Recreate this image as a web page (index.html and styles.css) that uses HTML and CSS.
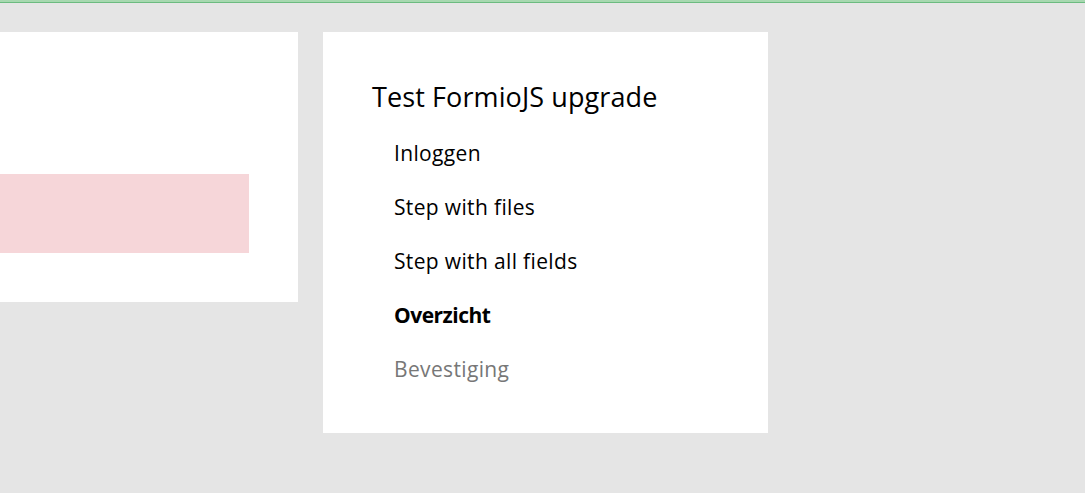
FILE: index.html
```html
<!DOCTYPE html>
<html lang="nl">
<head>
<meta charset="utf-8">
<title>Test FormioJS upgrade</title>
<link rel="stylesheet" href="styles.css">
</head>
<body>
<div class="topbar"></div>
<main class="layout">
  <section class="card card--form">
    <div class="alert"></div>
  </section>
  <aside class="card card--progress">
    <h2 class="progress__title">Test FormioJS upgrade</h2>
    <ol class="progress__list">
      <li class="progress__item">Inloggen</li>
      <li class="progress__item">Step with files</li>
      <li class="progress__item">Step with all fields</li>
      <li class="progress__item progress__item--current">Overzicht</li>
      <li class="progress__item progress__item--future">Bevestiging</li>
    </ol>
  </aside>
</main>
</body>
</html>
```

FILE: styles.css
```css
html, body {
  margin: 0;
  padding: 0;
}
body {
  background: #e5e5e5;
  font-family: "Open Sans", "Noto Sans", sans-serif;
  color: #000;
  height: 493px;
  overflow: hidden;
}
.topbar {
  height: 2px;
  background: #a7d8b0;
  border-bottom: 1px solid #6cbb80;
}
.layout {
  display: flex;
  align-items: flex-start;
  gap: 25px;
  padding-top: 29px;
}
.card {
  background: #fff;
  box-sizing: border-box;
}
.card--form {
  width: 298px;
  height: 270px;
  padding: 142px 49px 49px 0;
}
.alert {
  height: 79px;
  background: #f6d6d9;
}
.card--progress {
  width: 445px;
  height: 401px;
  padding: 48px 49px 0 49px;
}
.progress__title {
  margin: 0;
  font-size: 27px;
  font-weight: 400;
  line-height: 34px;
  letter-spacing: 0.1px;
}
.progress__list {
  list-style: none;
  margin: 24px 0 0;
  padding: 0 0 0 22px;
}
.progress__item {
  font-size: 21px;
  line-height: 30px;
  letter-spacing: 0.35px;
  margin-bottom: 24px;
}
.progress__item--current {
  font-weight: 700;
  letter-spacing: -0.5px;
}
.progress__item--future {
  color: #777;
}
```
